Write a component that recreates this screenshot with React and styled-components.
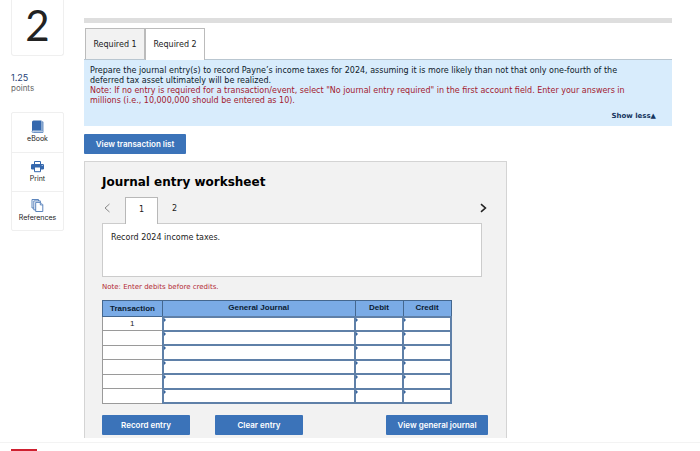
import React, { useState } from "react";
import styled, { createGlobalStyle } from "styled-components";

const GlobalStyle = createGlobalStyle`
    * {
        box-sizing: border-box;
    }

    body {
        margin: 0;
        background-color: white;
        font-family: "DejaVu Sans", Verdana, sans-serif;
        font-size: 8px;
        color: #1b1b1b;
    }

    button {
        margin: 0;
        font: inherit;
        color: inherit;
        cursor: pointer;
    }
`;

const Layout = styled.div`
    display: flex;
    gap: 20px;
    padding: 0 28px 4px 11px;
`;

const Sidebar = styled.aside`
    flex: 0 0 53px;
    font-family: Inter, sans-serif;
`;

const QuestionNumber = styled.div`
    height: 56px;
    border: 1px solid #efefef;
    border-top: none;
    border-radius: 0 0 3px 3px;
    font-family: Lato, sans-serif;
    font-size: 42px;
    line-height: 51px;
    text-align: center;
    color: #222;
`;

const Points = styled.div`
    padding: 16px 0;
    line-height: 11px;
    color: #666;
`;

const PointsValue = styled.div`
    font-size: 9px;
    color: #1f3f77;
`;

const ToolList = styled.nav`
    display: flex;
    flex-direction: column;
    margin-top: 2px;
    border: 1px solid #efefef;
    border-radius: 2px;
    font-size: 7px;
`;

const Tool = styled.button`
    display: flex;
    flex-direction: column;
    align-items: center;
    gap: 1px;
    height: 39px;
    padding: 7px 0 0;
    border: none;
    background: none;
    line-height: 10px;

    & + & {
        border-top: 1px solid #efefef;
    }
`;

const Main = styled.main`
    flex: 1;
    min-width: 0;
    padding-top: 18px;
`;

const Progress = styled.div`
    height: 5px;
    background-color: #dedede;
`;

const Tabs = styled.div`
    display: flex;
    margin-top: 5px;
    padding-left: 1px;
`;

/* the open tab covers the top border of the panel below it */
const Tab = styled.button`
    width: 60px;
    height: ${(props) => (props.$active ? "32px" : "31px")};
    margin-bottom: ${(props) => (props.$active ? "-1px" : "0")};
    padding: 0;
    border: 1px solid #bbb;
    border-bottom: none;
    background-color: ${(props) => (props.$active ? "white" : "#f2f2f2")};
    z-index: 1;
`;

const Instructions = styled.section`
    padding: 6px 16px 5px 6px;
    border-top: 1px solid #b9c6d0;
    background-color: #d8ecfc;
    line-height: 10px;
    color: #0e1a2b;
`;

const Paragraph = styled.p`
    margin: 0;
    padding-right: 20px;
    color: ${(props) => (props.$note ? "#a3202f" : "inherit")};
`;

const ShowLess = styled.button`
    display: block;
    margin: 5px 0 0 auto;
    padding: 0;
    border: none;
    background: none;
    font-size: 7px;
    line-height: 10px;
    font-weight: bold;
    color: #16355f;
`;

const Button = styled.button`
    width: ${(props) => (props.$wide ? "102px" : "88px")};
    height: 20px;
    padding: 0;
    border: none;
    border-radius: 1px;
    background-color: #3b73b9;
    font-family: Inter, sans-serif;
    font-weight: 600;
    color: white;
`;

const ButtonBar = styled.div`
    padding: 8px 0 7px;
`;

const Worksheet = styled.section`
    max-width: 423px;
    padding: 13px 18px 3px 17px;
    border: 1px solid #d4d4d4;
    border-bottom: none;
    background-color: #f2f2f2;
`;

const Title = styled.h2`
    margin: 0;
    font-size: 12px;
    line-height: 14px;
    color: black;
`;

const Pager = styled.div`
    display: flex;
    align-items: center;
    margin-top: 8px;
`;

const Arrow = styled.button`
    display: flex;
    width: 10px;
    padding: 0 0 5px;
    border: none;
    background: none;
    color: ${(props) => (props.$dim ? "#888" : "#222")};
`;

/* same here, the open page runs into the description box */
const Page = styled.button`
    width: 33px;
    height: 27px;
    margin-bottom: -1px;
    padding: 0 0 4px;
    border: ${(props) => (props.$active ? "1px solid #b8b8b8" : "none")};
    border-bottom: none;
    background-color: ${(props) => (props.$active ? "white" : "transparent")};
    z-index: 1;
`;

const Pages = styled.div`
    display: flex;
    flex: 1;
    padding-left: 13px;
`;

const Description = styled.div`
    min-height: 54px;
    margin-right: 6px;
    padding: 9px 8px;
    border: 1px solid #ccc;
    background-color: white;
    line-height: 10px;
`;

const Hint = styled.p`
    margin: 5px 0 8px;
    font-size: 7px;
    line-height: 10px;
    color: #b32a35;
`;

const Table = styled.table`
    width: 350px;
    max-width: 100%;
    height: 104px;
    border-collapse: collapse;
    table-layout: fixed;
    font-family: "Liberation Sans", Arial, sans-serif;
`;

const HeadCell = styled.th`
    width: ${(props) => props.$width};
    height: 16px;
    padding: 0;
    border: 1px solid #44678f;
    background-color: #7aabe6;
    font-size: 8px;
    line-height: 10px;
    color: #0b1c33;
`;

const NumberCell = styled.td`
    padding: 0;
    border: 1px solid #9a9a9a;
    background-color: white;
    line-height: 10px;
    text-align: center;
`;

const EntryCell = styled.td`
    padding: 0;
    border: 2px solid #5f80a8;
    background-color: white;
    line-height: 10px;
    vertical-align: top;
`;

const EntryInput = styled.input`
    flex: 1;
    min-width: 0;
    height: 10px;
    padding: 0 2px;
    border: none;
    outline: none;
    background: none;
    font: inherit;
`;

const Entry = styled.div`
    display: flex;
    align-items: flex-start;

    &::before {
        content: "";
        border: 2px solid transparent;
        border-left-color: #35639b;
        border-right: none;
    }
`;

const Actions = styled.div`
    display: flex;
    gap: 25px;
    margin-top: 11px;

    ${Button}:last-child {
        margin-left: auto;
    }
`;

const Footer = styled.footer`
    padding: 6px 11px 0;
    border-top: 1px solid #f3f3f3;
`;

const FooterMark = styled.div`
    width: 26px;
    height: 3px;
    background-color: #cf2030;
`;

const BookIcon = () => (
    <svg width="13" height="13" viewBox="0 0 13 13" aria-hidden="true">
        <path d="M2.5 0.5H10.5v10H2.5a1.5 1.5 0 0 0-1.5 1V2a1.5 1.5 0 0 1 1.5-1.5z" fill="#3568ae" />
        <path d="M1 11.2a1.2 1.2 0 0 0 1.3 1.3H12V1.8H11.2V11H2.2" fill="none" stroke="#5f88c0" strokeWidth="0.9" />
    </svg>
);

const PrintIcon = () => (
    <svg width="13" height="13" viewBox="0 0 13 13" aria-hidden="true">
        <path d="M3.5 4V1.5h6V4" fill="white" stroke="#3568ae" />
        <rect x="0" y="4" width="13" height="5.5" rx="1.3" fill="#3568ae" />
        <path d="M3.5 7h6v4.7h-6z" fill="white" stroke="#3568ae" />
        <circle cx="11.2" cy="5.5" r="0.5" fill="white" />
    </svg>
);

const CopyIcon = () => (
    <svg width="13" height="13" viewBox="0 0 13 13" fill="white" stroke="#4b78b5" strokeWidth="0.9" aria-hidden="true">
        <path d="M1 0.5h6.5v8.5H1z" />
        <path d="M2.8 1.9h6.5v9H2.8z" />
        <path d="M4.7 3.4h4.8l2.3 2.3v6.8H4.7z" />
        <path d="M9.3 3.4v2.5h2.5" />
    </svg>
);

const Chevron = ({ right }) => (
    <svg width="10" height="10" viewBox="0 0 10 10" fill="none" stroke="currentColor" aria-hidden="true">
        {right ? <path d="M3 1.2L7.4 5L3 8.8" strokeWidth="1.6" /> : <path d="M7.5 1L3 5L7.5 9" />}
    </svg>
);

const tools = [
    { label: "eBook", Icon: BookIcon },
    { label: "Print", Icon: PrintIcon },
    { label: "References", Icon: CopyIcon },
];

const columns = ["General Journal", "Debit", "Credit"];
const rows = ["1", "", "", "", "", ""];

const JournalTable = () => {
    return (
        <Table>
            <thead>
                <tr>
                    <HeadCell $width="60px">Transaction</HeadCell>
                    <HeadCell>General Journal</HeadCell>
                    <HeadCell $width="48px">Debit</HeadCell>
                    <HeadCell $width="48px">Credit</HeadCell>
                </tr>
            </thead>
            <tbody>
                {rows.map((number, i) => (
                    <tr key={i}>
                        <NumberCell>{number}</NumberCell>
                        {columns.map((column) => (
                            <EntryCell key={column}>
                                <Entry>
                                    <EntryInput aria-label={`${column}, line ${i + 1}`} />
                                </Entry>
                            </EntryCell>
                        ))}
                    </tr>
                ))}
            </tbody>
        </Table>
    );
};

const App = () => {
    const [tab, setTab] = useState(2);

    return (
        <>
            <GlobalStyle />
            <Layout>
                <Sidebar>
                    <QuestionNumber>2</QuestionNumber>
                    <Points>
                        <PointsValue>1.25</PointsValue>
                        points
                    </Points>
                    <ToolList>
                        {tools.map(({ label, Icon }) => (
                            <Tool key={label}>
                                <Icon />
                                {label}
                            </Tool>
                        ))}
                    </ToolList>
                </Sidebar>
                <Main>
                    <Progress />
                    <Tabs>
                        <Tab $active={tab === 1} onClick={() => setTab(1)}>Required 1</Tab>
                        <Tab $active={tab === 2} onClick={() => setTab(2)}>Required 2</Tab>
                    </Tabs>
                    <Instructions>
                        <Paragraph>
                            Prepare the journal entry(s) to record Payne’s income taxes for 2024, assuming it is more
                            likely than not that only one-fourth of the deferred tax asset ultimately will be realized.
                        </Paragraph>
                        <Paragraph $note>
                            Note: If no entry is required for a transaction/event, select "No journal entry required" in
                            the first account field. Enter your answers in millions (i.e., 10,000,000 should be entered
                            as 10).
                        </Paragraph>
                        <ShowLess>Show less▲</ShowLess>
                    </Instructions>
                    <ButtonBar>
                        <Button $wide>View transaction list</Button>
                    </ButtonBar>
                    <Worksheet>
                        <Title>Journal entry worksheet</Title>
                        <Pager>
                            <Arrow $dim aria-label="Previous">
                                <Chevron />
                            </Arrow>
                            <Pages>
                                <Page $active>1</Page>
                                <Page>2</Page>
                            </Pages>
                            <Arrow aria-label="Next">
                                <Chevron right />
                            </Arrow>
                        </Pager>
                        <Description>Record 2024 income taxes.</Description>
                        <Hint>Note: Enter debits before credits.</Hint>
                        <JournalTable />
                        <Actions>
                            <Button>Record entry</Button>
                            <Button>Clear entry</Button>
                            <Button $wide>View general journal</Button>
                        </Actions>
                    </Worksheet>
                </Main>
            </Layout>
            <Footer>
                <FooterMark />
            </Footer>
        </>
    );
};

export default App;
